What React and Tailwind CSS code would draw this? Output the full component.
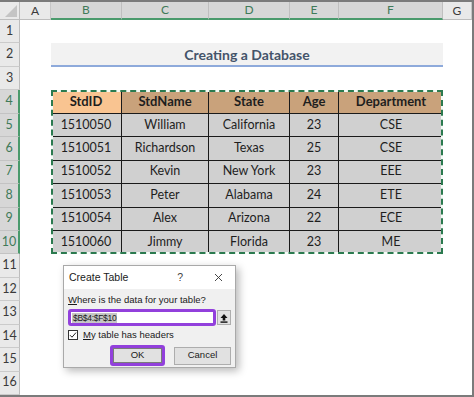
import React from 'react';

const cols = [
  { l: 'A', w: 31 },
  { l: 'B', w: 71, sel: true },
  { l: 'C', w: 87, sel: true },
  { l: 'D', w: 81, sel: true },
  { l: 'E', w: 49, sel: true },
  { l: 'F', w: 104, sel: true },
  { l: 'G', w: 29 },
];

const tableCols = ['w-[71px]', 'w-[87px]', 'w-[81px]', 'w-[49px]', 'w-[104px]'];
const head = ['StdID', 'StdName', 'State', 'Age', 'Department'];
const data = [
  ['1510050', 'William', 'California', '23', 'CSE'],
  ['1510051', 'Richardson', 'Texas', '25', 'CSE'],
  ['1510052', 'Kevin', 'New York', '23', 'EEE'],
  ['1510053', 'Peter', 'Alabama', '24', 'ETE'],
  ['1510054', 'Alex', 'Arizona', '22', 'ECE'],
  ['1510060', 'Jimmy', 'Florida', '23', 'ME'],
];

const rows = Array.from({ length: 16 }, (_, i) => i + 1);

function CreateTableDialog() {
  return (
    <div className="absolute left-[63px] top-[263px] w-[173px] h-[103px] border border-[#a9a9a9] bg-[#f0f0f0] shadow-[3px_3px_8px_rgba(0,0,0,0.28)] font-['Liberation_Sans',sans-serif] text-[#1a1a1a] flex flex-col">
      {/* title bar */}
      <div className="h-[23px] bg-white flex items-center pl-[5px] text-[10.5px]">
        <span>Create Table</span>
        <span className="ml-[49px] text-[#444]">?</span>
        <svg className="ml-[31px]" width="9" height="9" viewBox="0 0 9 9">
          <path d="M1 1 L8 8 M8 1 L1 8" stroke="#333" strokeWidth="0.9" />
        </svg>
      </div>
      <div className="flex flex-col px-[4px] pt-[5px] text-[9.5px]">
        <div className="leading-[11px]">
          <span className="underline">W</span>here is the data for your table?
        </div>
        <div className="flex items-center mt-[4px]">
          <div className="w-[149px] h-[17px] border-[3px] border-[#9240dc] rounded-[3px] bg-white flex items-center pl-[1px]">
            <span className="bg-[#c6c6c6] text-[8.5px] leading-[10px] tracking-[-0.3px] px-[1px]">$B$4:$F$10</span>
          </div>
          <div className="ml-[1px] w-[14px] h-[15px] border border-[#adadad] bg-[#e1e1e1] flex items-center justify-center">
            <svg width="8" height="10" viewBox="0 0 8 10">
              <path d="M4 1 L7.5 5 H5.3 V7.6 H2.7 V5 H0.5 Z" fill="#111" />
              <rect x="0.5" y="8.4" width="7" height="1.4" fill="#111" />
            </svg>
          </div>
        </div>
        <div className="flex items-center mt-[4px] h-[10px]">
          <div className="w-[10px] h-[10px] border border-[#333] bg-white flex items-center justify-center">
            <svg width="8" height="8" viewBox="0 0 8 8">
              <path d="M1 4.2 L3 6.2 L7 1.6" stroke="#222" strokeWidth="1" fill="none" />
            </svg>
          </div>
          <span className="ml-[5px] leading-[10px]">
            <span className="underline">M</span>y table has headers
          </span>
        </div>
        <div className="flex justify-end items-center mt-[5px] gap-[9px]">
          <div className="w-[55px] h-[21px] border-[3px] border-[#9240dc] rounded-[3px] flex">
            <div className="flex-1 bg-[#e1e1e1] border border-[#7a7a7a] flex items-center justify-center text-[9.5px]">OK</div>
          </div>
          <div className="w-[57px] h-[18px] bg-[#e1e1e1] border border-[#adadad] flex items-center justify-center text-[9.5px]">Cancel</div>
        </div>
      </div>
    </div>
  );
}

export default function App() {
  return (
    <div className="relative w-[474px] h-[397px] bg-white border-t-2 border-r-2 border-b-2 border-[#7b7b7b] overflow-hidden font-['Lato',sans-serif]">
      {/* column headers */}
      <div className="flex h-[18px]">
        <div className="w-[20px] h-full bg-[#e9e9e9] border-r border-b border-[#bdbdbd] flex items-end justify-end p-[2px]">
          <svg width="12" height="12" viewBox="0 0 12 12">
            <path d="M12 0 L12 12 L0 12 Z" fill="#c4c4c4" />
          </svg>
        </div>
        {cols.map((c) => (
          <div
            key={c.l}
            style={{ width: c.w }}
            className={
              c.sel
                ? 'h-full bg-[#d7d7d7] border-r border-[#bfbfbf] border-b-2 border-b-[#4a9a6c] flex items-center justify-center text-[12px] text-[#3f7a59]'
                : 'h-full bg-[#e9e9e9] border-r border-[#c6c6c6] border-b border-b-[#bdbdbd] flex items-center justify-center text-[12px] text-[#3a3a3a]'
            }
          >
            {c.l}
          </div>
        ))}
      </div>

      <div className="flex">
        {/* row headers */}
        <div className="w-[20px] flex flex-col">
          {rows.map((r) => {
            const sel = r >= 4 && r <= 10;
            return (
              <div
                key={r}
                className={
                  sel
                    ? 'h-[23.4375px] bg-[#d7d7d7] border-b border-[#c3c3c3] border-r-2 border-r-[#4a9a6c] flex items-center justify-center text-[12.5px] text-[#3f7a59]'
                    : 'h-[23.4375px] bg-[#e9e9e9] border-b border-[#cbcbcb] border-r border-r-[#bdbdbd] flex items-center justify-center text-[12.5px] text-[#3a3a3a]'
                }
              >
                {r}
              </div>
            );
          })}
        </div>

        {/* cells */}
        <div className="flex-1 flex flex-col">
          <div className="h-[23.4375px]" />
          <div className="h-[23.4375px] pl-[31px]">
            <div className="w-[392px] h-full bg-[#f2f2f2] border-b-2 border-[#8eaadb] flex items-center justify-center text-[14px] font-bold text-[#44546a]">
              Creating a Database
            </div>
          </div>
          <div className="h-[23.4375px]" />
          <div className="pl-[31px]">
            <div className="relative w-[392px]">
              <div className="flex">
                {head.map((h, i) => (
                  <div
                    key={h}
                    className={`${tableCols[i]} h-[23.4375px] ${i === 0 ? 'bg-[#f9c491]' : 'bg-[#c9a27b]'} ${i < 4 ? 'border-r' : ''} border-b border-[#1a1a1a] flex items-center justify-center text-[13px] font-bold text-[#1e1e1e]`}
                  >
                    {h}
                  </div>
                ))}
              </div>
              {data.map((row, ri) => (
                <div key={ri} className="flex">
                  {row.map((v, i) => (
                    <div
                      key={i}
                      className={`${tableCols[i]} h-[23.4375px] bg-[#d0d0d0] ${i < 4 ? 'border-r' : ''} ${ri < 5 ? 'border-b' : ''} border-[#1a1a1a] flex items-center justify-center text-[12.5px] text-[#1e1e1e]`}
                    >
                      {v}
                    </div>
                  ))}
                </div>
              ))}
              {/* copy marquee */}
              <div className="absolute inset-0 border-2 border-[#f4fbf6] pointer-events-none" />
              <div className="absolute inset-0 border-2 border-dashed border-[#2b7a4f] pointer-events-none" />
            </div>
          </div>
        </div>
      </div>

      <CreateTableDialog />
    </div>
  );
}
